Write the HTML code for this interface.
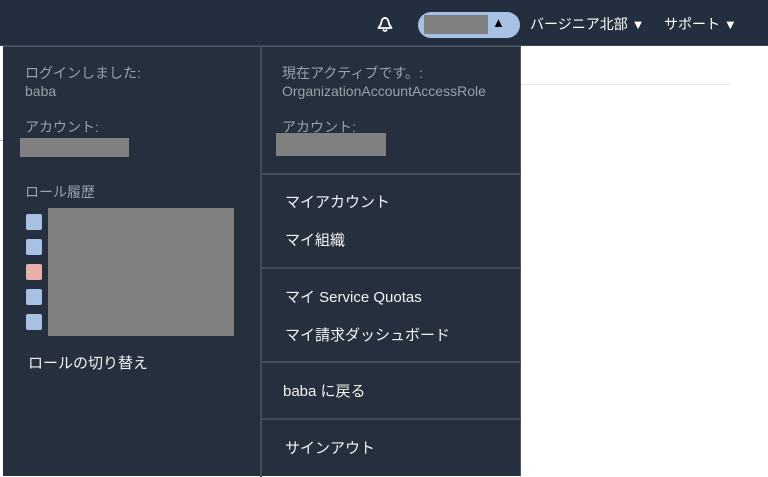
<!DOCTYPE html>
<html><head><meta charset="utf-8"><style>
*{margin:0;padding:0;box-sizing:border-box}
body{width:768px;height:476px;overflow:hidden;background:#fff;position:relative;font-family:"Liberation Sans","Noto Sans CJK JP",sans-serif}
.nav{position:absolute;left:0;top:0;width:768px;height:46px;background:#232f3e;border-bottom:1px solid #3d4754}
.abs{position:absolute}
.panel{position:absolute;left:3px;top:46px;width:518px;height:430px;background:#252f3e;border-top:1px solid #4a5462;border-right:1px solid #4a5462}
.t{position:absolute;font-size:14px;color:#9aa1aa;white-space:nowrap;line-height:17px}
.w{position:absolute;font-size:15px;color:#f2f3f3;white-space:nowrap}
.g{position:absolute;background:#808080}
.hr{position:absolute;left:258px;width:260px;height:2px;background:#424c59}
.sq{position:absolute;left:23px;width:16px;height:16px;border-radius:2px;background:#a7c1e5}
</style></head><body>
<div class="abs" style="left:0;top:140px;width:3px;height:1px;background:#aac"></div>
<div class="abs" style="left:521px;top:84px;width:209px;height:1px;background:#e4e4e4"></div>
<div class="nav">
<svg class="abs" style="left:376px;top:15px" width="18" height="18" viewBox="0 0 18 18" fill="none" stroke="#fff" stroke-width="1.8" stroke-linejoin="round"><path d="M9 2 L9 3 M9 3 C6 3 5.5 6 5 9 L2.5 13 L15.5 13 L13 9 C12.5 6 12 3 9 3 Z"/><path d="M7 14.5 Q9 17.5 11 14.5"/></svg>
<div class="abs" style="left:418px;top:12px;width:102px;height:26px;border-radius:13px;background:#a7c1e5"></div>
<div class="abs" style="left:424px;top:15px;width:64px;height:19px;background:#808080"></div>
<div class="abs" style="left:492px;top:15px;font-size:13px;color:#000">▲</div>
<div class="abs" style="left:530px;top:14px;font-size:14px;color:#fff;white-space:nowrap">バージニア北部 <span style="font-size:13px">▼</span></div>
<div class="abs" style="left:664px;top:14px;font-size:14px;color:#fff;white-space:nowrap">サポート <span style="font-size:13px">▼</span></div>
</div>
<div class="panel">
<div class="abs" style="left:257px;top:0;width:2px;height:430px;background:#424c59"></div>
<div class="t" style="left:22px;top:18px">ログインしました:</div>
<div class="t" style="left:22px;top:36px">baba</div>
<div class="t" style="left:22px;top:72px">アカウント:</div>
<div class="g" style="left:17px;top:91px;width:109px;height:19px"></div>
<div class="t" style="left:22px;top:137px">ロール履歴</div>
<div class="sq" style="top:167px"></div>
<div class="sq" style="top:192px"></div>
<div class="sq" style="top:217px;background:#e7b1a8"></div>
<div class="sq" style="top:242px"></div>
<div class="sq" style="top:267px"></div>
<div class="g" style="left:45px;top:161px;width:186px;height:128px"></div>
<div class="w" style="left:25px;top:305px">ロールの切り替え</div>
<div class="t" style="left:279px;top:18px">現在アクティブです。:</div>
<div class="t" style="left:279px;top:36px">OrganizationAccountAccessRole</div>
<div class="t" style="left:279px;top:72px">アカウント:</div>
<div class="g" style="left:273px;top:86px;width:110px;height:23px"></div>
<div class="hr" style="top:126px"></div>
<div class="w" style="left:282px;top:144px">マイアカウント</div>
<div class="w" style="left:282px;top:182px">マイ組織</div>
<div class="hr" style="top:220px"></div>
<div class="w" style="left:282px;top:239px">マイ Service Quotas</div>
<div class="w" style="left:282px;top:277px">マイ請求ダッシュボード</div>
<div class="hr" style="top:314px"></div>
<div class="w" style="left:280px;top:333px">baba に戻る</div>
<div class="hr" style="top:371px"></div>
<div class="w" style="left:282px;top:390px">サインアウト</div>
</div>
</body></html>
